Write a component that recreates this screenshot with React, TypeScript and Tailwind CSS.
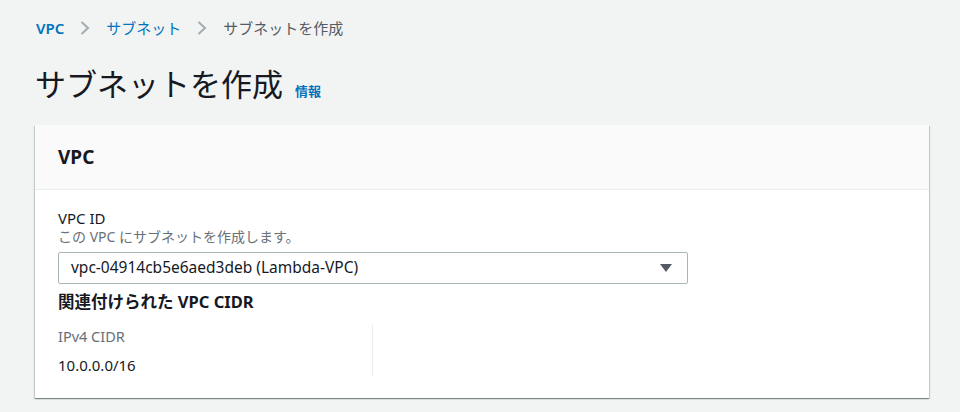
const font = { fontFamily: '"Noto Sans", "Noto Sans CJK JP", sans-serif' };

function Chevron() {
  return (
    <svg className="mx-[16px]" width="10" height="14" viewBox="0 0 10 14" fill="none">
      <path d="M1.5 1 L8 7 L1.5 13" stroke="#a3adb0" strokeWidth="2" />
    </svg>
  );
}

export default function App() {
  return (
    <div className="min-h-[412px] w-[960px] bg-[#f2f3f3] text-[#16191f]" style={font}>
      {/* Breadcrumb */}
      <nav className="flex items-center pl-[36px] pt-[17px] text-[15px] leading-[22px]">
        <span className="font-semibold text-[#0073bb]">VPC</span>
        <Chevron />
        <span className="text-[#0073bb]">サブネット</span>
        <Chevron />
        <span className="text-[#545b64]">サブネットを作成</span>
      </nav>

      {/* Title */}
      <div className="flex items-baseline pl-[35px] pt-[25px]">
        <h1 className="text-[31px] font-normal leading-[40px] text-[#16191f]">サブネットを作成</h1>
        <span className="ml-[12px] text-[13px] font-bold text-[#0073bb]">情報</span>
      </div>

      {/* Card */}
      <div className="mx-[35px] mt-[21px] w-[894px] bg-white shadow-[0_1px_1px_0_rgba(0,28,36,0.3),1px_1px_1px_0_rgba(0,28,36,0.15),-1px_1px_1px_0_rgba(0,28,36,0.15)]">
        <div className="border-b border-[#eaeded] bg-[#fafafa] px-[23px] py-[19px]">
          <h2 className="text-[19px] font-bold leading-[26px]">VPC</h2>
        </div>
        <div className="px-[23px] pb-[22px] pt-[17px]">
          <div className="text-[15px] leading-[22px]">VPC ID</div>
          <div className="text-[14px] leading-[16px] text-[#687078]">この VPC にサブネットを作成します。</div>
          <div className="mt-[7px] flex h-[32px] w-[630px] items-center justify-between rounded-[2px] border border-[#aab7b8] pl-[12px] pr-[15px] text-[15.5px]">
            <span>vpc-04914cb5e6aed3deb (Lambda-VPC)</span>
            <svg width="12" height="8" viewBox="0 0 12 8">
              <path d="M0 0 H12 L6 8 Z" fill="#545b64" />
            </svg>
          </div>
          <div className="mt-[7px] text-[16.5px] font-bold leading-[22px]">関連付けられた VPC CIDR</div>
          <div className="mt-[12px] flex">
            <div className="w-[315px] border-r border-[#eaeded]">
              <div className="text-[14.5px] leading-[22px] text-[#687078]">IPv4 CIDR</div>
              <div className="mt-[7px] text-[15px] leading-[22px]">10.0.0.0/16</div>
            </div>
          </div>
        </div>
      </div>
    </div>
  );
}
